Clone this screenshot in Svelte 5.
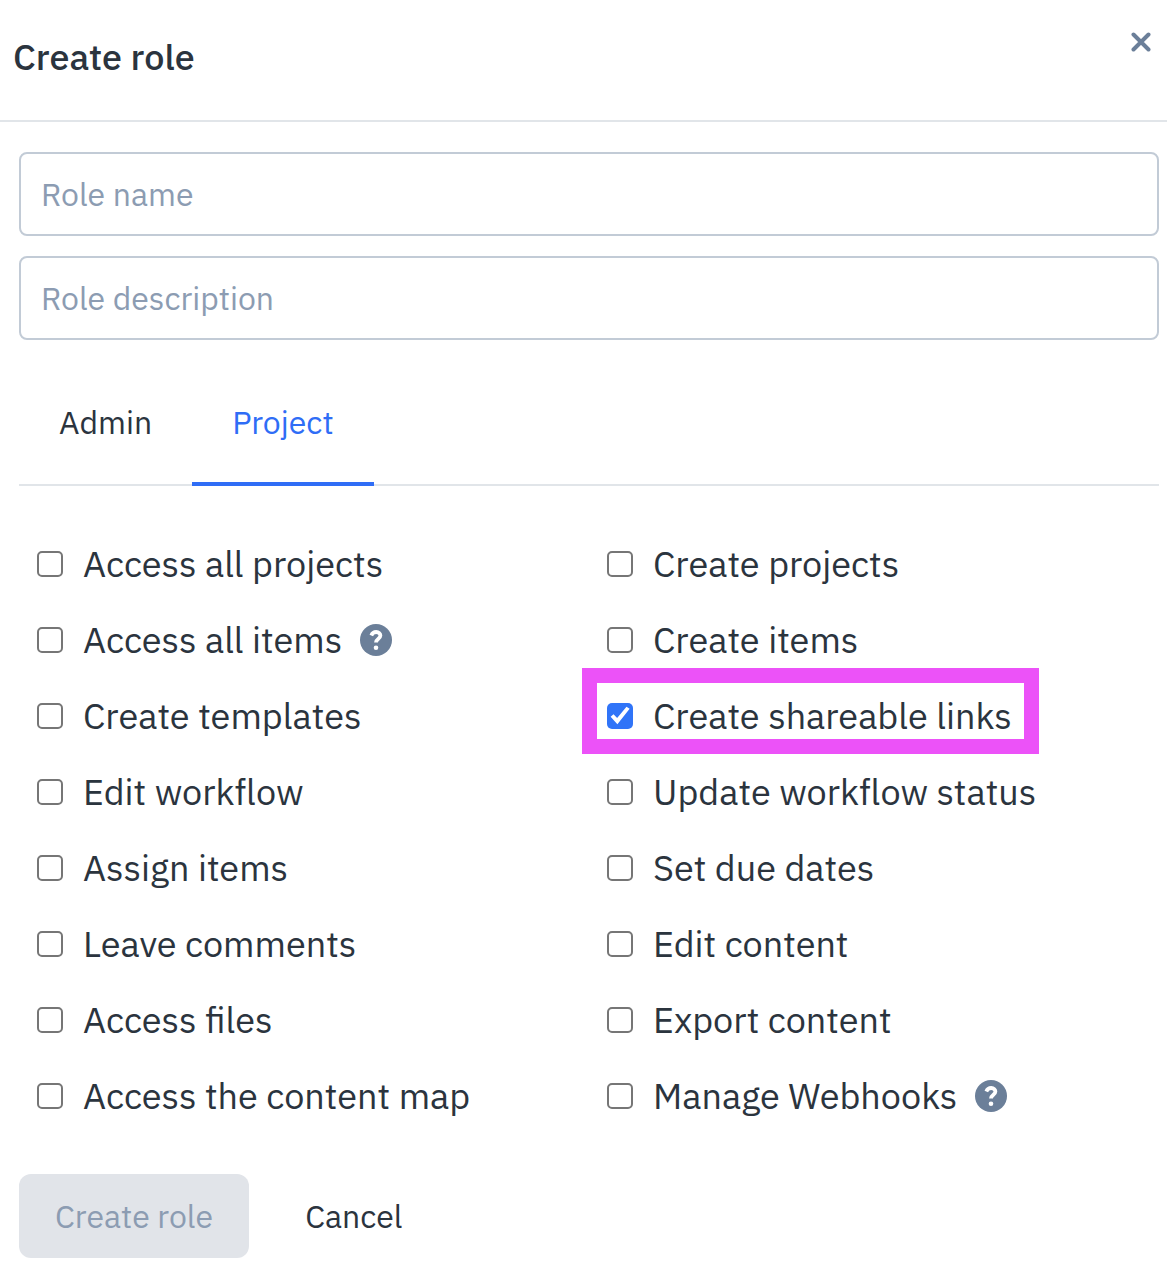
<script lang="ts">
  type Permission = {
    id: string;
    label: string;
    checked?: boolean;
    help?: string;
    highlighted?: boolean;
  };

  let name = $state('');
  let description = $state('');
  let activeTab = $state('Project');

  const tabs = ['Admin', 'Project'];

  let permissions: Permission[] = $state([
    { id: 'access-projects', label: 'Access all projects' },
    { id: 'create-projects', label: 'Create projects' },
    { id: 'access-items', label: 'Access all items', help: 'About item access' },
    { id: 'create-items', label: 'Create items' },
    { id: 'create-templates', label: 'Create templates' },
    { id: 'share-links', label: 'Create shareable links', checked: true, highlighted: true },
    { id: 'edit-workflow', label: 'Edit workflow' },
    { id: 'update-status', label: 'Update workflow status' },
    { id: 'assign-items', label: 'Assign items' },
    { id: 'due-dates', label: 'Set due dates' },
    { id: 'comments', label: 'Leave comments' },
    { id: 'edit-content', label: 'Edit content' },
    { id: 'files', label: 'Access files' },
    { id: 'export-content', label: 'Export content' },
    { id: 'content-map', label: 'Access the content map' },
    { id: 'webhooks', label: 'Manage Webhooks', help: 'About webhooks' }
  ]);
</script>

<form class="dialog" aria-labelledby="dialog-title" onsubmit={(e) => e.preventDefault()}>
  <header class="header">
    <h1 id="dialog-title">Create role</h1>
    <button type="button" class="close" aria-label="Close">
      <svg width="20" height="20" viewBox="0 0 20 20" fill="none" stroke="currentColor" stroke-width="4">
        <path d="M2.5 2.5L17.5 17.5M17.5 2.5L2.5 17.5" stroke-linecap="round" />
      </svg>
    </button>
  </header>

  <div class="body">
    <div class="fields">
      <input class="field" type="text" placeholder="Role name" aria-label="Role name" bind:value={name} />
      <input
        class="field"
        type="text"
        placeholder="Role description"
        aria-label="Role description"
        bind:value={description}
      />
    </div>

    <div class="tabs" role="tablist">
      {#each tabs as tab}
        <button
          type="button"
          role="tab"
          class="tab"
          class:active={tab === activeTab}
          aria-selected={tab === activeTab}
          onclick={() => (activeTab = tab)}
        >
          {tab}
        </button>
      {/each}
    </div>

    <div class="permissions">
      {#each permissions as permission (permission.id)}
        <div class="permission">
          <div class="option" class:highlighted={permission.highlighted}>
            <input type="checkbox" id={permission.id} bind:checked={permission.checked} />
            <label for={permission.id}>{permission.label}</label>
          </div>
          {#if permission.help}
            <button type="button" class="help" aria-label={permission.help}>
              <svg width="32" height="32" viewBox="0 0 32 32" fill="none">
                <circle cx="16" cy="16" r="16" fill="currentColor" />
                <path
                  d="M11.3 11.4C12.3 9 13.8 8 16.2 8C18.8 8 20.4 9.6 20.4 11.6C20.4 14.8 16 14.6 16 18.6"
                  stroke="#fff"
                  stroke-width="3.8"
                />
                <circle cx="16" cy="23.7" r="2.3" fill="#fff" />
              </svg>
            </button>
          {/if}
        </div>
      {/each}
    </div>

    <footer class="actions">
      <button type="submit" class="btn btn--primary" disabled={!name}>Create role</button>
      <button type="button" class="btn">Cancel</button>
    </footer>
  </div>
</form>

<style>
  :global(body) {
    background: #fff;
  }

  .dialog {
    font-family: 'IBM Plex Sans', Roboto, sans-serif;
    color: #2b343e;
  }

  button,
  input {
    font-family: inherit;
    color: inherit;
  }

  button {
    background: none;
    border: none;
    padding: 0;
    cursor: pointer;
  }

  svg {
    display: block;
  }

  .header {
    display: flex;
    align-items: flex-start;
    justify-content: space-between;
    padding: 32px 16px 38px 13px;
    border-bottom: 2px solid #e1e5e9;
  }

  h1 {
    margin: 0;
    font-size: 36px;
    line-height: 50px;
    font-weight: 500;
  }

  .close {
    color: #6b7f99;
  }

  .body {
    padding: 30px 8px 27px 19px;
  }

  .fields {
    display: flex;
    flex-direction: column;
    gap: 20px;
  }

  .field {
    box-sizing: border-box;
    width: 100%;
    height: 84px;
    padding: 0 20px;
    border: 2px solid #c2cbd6;
    border-radius: 8px;
    background: #fff;
    font-size: 32px;
  }

  .field::placeholder {
    color: #8c9cb2;
    opacity: 1;
  }

  .tabs {
    display: flex;
    margin-top: 20px;
    box-shadow: inset 0 -2px #e1e5e9;
  }

  .tab {
    height: 126px;
    padding: 0 40px 2px;
    font-size: 32px;
    line-height: 40px;
  }

  .active {
    color: #2f6df6;
    box-shadow: inset 0 -4px #2f6df6;
  }

  .permissions {
    display: grid;
    grid-template-columns: 1fr 1fr;
    margin-top: 40px;
    padding-left: 18px;
    column-gap: 18px;
  }

  .permission {
    display: flex;
    align-items: center;
    gap: 18px;
    height: 76px;
    font-size: 36px;
    line-height: 48px;
    white-space: nowrap;
  }

  .option {
    position: relative;
    display: flex;
    align-items: center;
    gap: 20px;
  }

  .highlighted::after {
    content: '';
    position: absolute;
    inset: -24px -27px -14px -25px;
    border: 15px solid #ec52f8;
    pointer-events: none;
  }

  input[type='checkbox'] {
    appearance: none;
    box-sizing: border-box;
    width: 26px;
    height: 26px;
    margin: 0;
    border: 2px solid #767676;
    border-radius: 5px;
    background: #fff;
  }

  input[type='checkbox']:checked {
    border: none;
    background: #3074f8;
  }

  input[type='checkbox']:checked::before {
    content: '';
    display: block;
    height: 100%;
    background: #fff;
    clip-path: polygon(14% 53%, 25% 43%, 39% 58%, 75% 14%, 87% 22%, 40% 82%);
  }

  .help {
    color: #6b7f99;
  }

  .actions {
    display: flex;
    gap: 20px;
    margin-top: 40px;
  }

  .btn {
    height: 84px;
    padding: 0 36px;
    border-radius: 12px;
    font-size: 32px;
  }

  .btn--primary:disabled {
    background: #e1e4e9;
    color: #8c9cb2;
    cursor: default;
  }
</style>
